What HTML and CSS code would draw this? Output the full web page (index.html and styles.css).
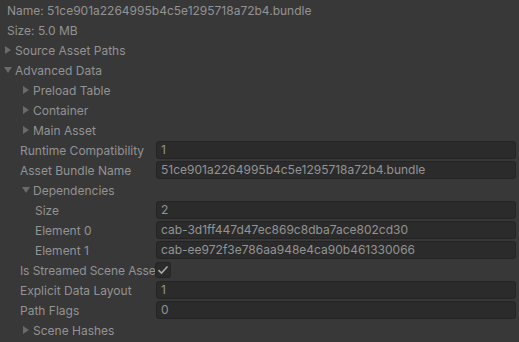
FILE: index.html
```html
<!DOCTYPE html>
<html>
<head>
<meta charset="utf-8">
<link rel="stylesheet" href="styles.css">
</head>
<body>
<div class="inspector">
  <div class="row info"><span class="label">Name: 51ce901a2264995b4c5e1295718a72b4.bundle</span></div>
  <div class="row info"><span class="label">Size: 5.0 MB</span></div>
  <div class="row fold l0"><svg class="tri" width="8" height="10" viewBox="0 0 8 10"><path d="M1 1 L7 5 L1 9 Z"/></svg><span class="label">Source Asset Paths</span></div>
  <div class="row fold l0"><svg class="tri" width="10" height="8" viewBox="0 0 10 8"><path d="M1 1 L9 1 L5 7 Z"/></svg><span class="label">Advanced Data</span></div>
  <div class="row fold l1"><svg class="tri" width="8" height="10" viewBox="0 0 8 10"><path d="M1 1 L7 5 L1 9 Z"/></svg><span class="label">Preload Table</span></div>
  <div class="row fold l1"><svg class="tri" width="8" height="10" viewBox="0 0 8 10"><path d="M1 1 L7 5 L1 9 Z"/></svg><span class="label">Container</span></div>
  <div class="row fold l1"><svg class="tri" width="8" height="10" viewBox="0 0 8 10"><path d="M1 1 L7 5 L1 9 Z"/></svg><span class="label">Main Asset</span></div>
  <div class="row prop p1"><span class="plabel">Runtime Compatibility</span><div class="field">1</div></div>
  <div class="row prop p1"><span class="plabel">Asset Bundle Name</span><div class="field">51ce901a2264995b4c5e1295718a72b4.bundle</div></div>
  <div class="row fold l1"><svg class="tri" width="10" height="8" viewBox="0 0 10 8"><path d="M1 1 L9 1 L5 7 Z"/></svg><span class="label">Dependencies</span></div>
  <div class="row prop p2"><span class="plabel">Size</span><div class="field">2</div></div>
  <div class="row prop p2"><span class="plabel">Element 0</span><div class="field">cab-3d1ff447d47ec869c8dba7ace802cd30</div></div>
  <div class="row prop p2"><span class="plabel">Element 1</span><div class="field">cab-ee972f3e786aa948e4ca90b461330066</div></div>
  <div class="row prop p1"><span class="plabel tight">Is Streamed Scene Asset</span><div class="check"><svg width="12" height="10" viewBox="0 0 12 10"><path d="M1.5 5.2 L4.5 8 L10.5 1.5" fill="none" stroke="#a8a8a8" stroke-width="1.6"/></svg></div></div>
  <div class="row prop p1"><span class="plabel">Explicit Data Layout</span><div class="field">1</div></div>
  <div class="row prop p1"><span class="plabel">Path Flags</span><div class="field">0</div></div>
  <div class="row fold l1"><svg class="tri" width="8" height="10" viewBox="0 0 8 10"><path d="M1 1 L7 5 L1 9 Z"/></svg><span class="label">Scene Hashes</span></div>
</div>
</body>
</html>
```
FILE: styles.css
```css
html, body {
  margin: 0;
  padding: 0;
  background: #383838;
}
body {
  width: 519px;
  height: 342px;
  overflow: hidden;
  font-family: Inter, "Noto Sans", sans-serif;
  font-size: 12px;
  color: #939393;
}
.inspector {
  display: flex;
  flex-direction: column;
}
.row {
  height: 20px;
  display: flex;
  align-items: center;
  white-space: nowrap;
}
.info {
  padding-left: 7px;
}
.tri {
  fill: #6a6a6a;
  flex: none;
}
.fold.l0 {
  padding-left: 3px;
}
.fold.l0 .tri {
  width: 10px;
  margin-right: 2px;
}
.fold.l1 {
  padding-left: 21px;
}
.fold.l1 .tri {
  width: 10px;
  margin-right: 2px;
}
.plabel {
  flex: none;
  overflow: hidden;
  text-overflow: clip;
  white-space: nowrap;
}
.p1 .plabel {
  padding-left: 20px;
  width: 134px;
}
.p1 .plabel.tight {
  width: 135px;
  letter-spacing: -0.1px;
}
.p2 .plabel {
  padding-left: 35px;
  width: 119px;
}
.field {
  margin-left: 2px;
  width: 350px;
  height: 16px;
  line-height: 16px;
  padding: 0 4px;
  background: #2b2b2b;
  border: 1px solid #242424;
  border-radius: 3px;
  overflow: hidden;
}
.check {
  width: 14px;
  height: 14px;
  background: #2b2b2b;
  border: 1px solid #242424;
  border-radius: 3px;
  display: flex;
  align-items: center;
  justify-content: center;
}
```
